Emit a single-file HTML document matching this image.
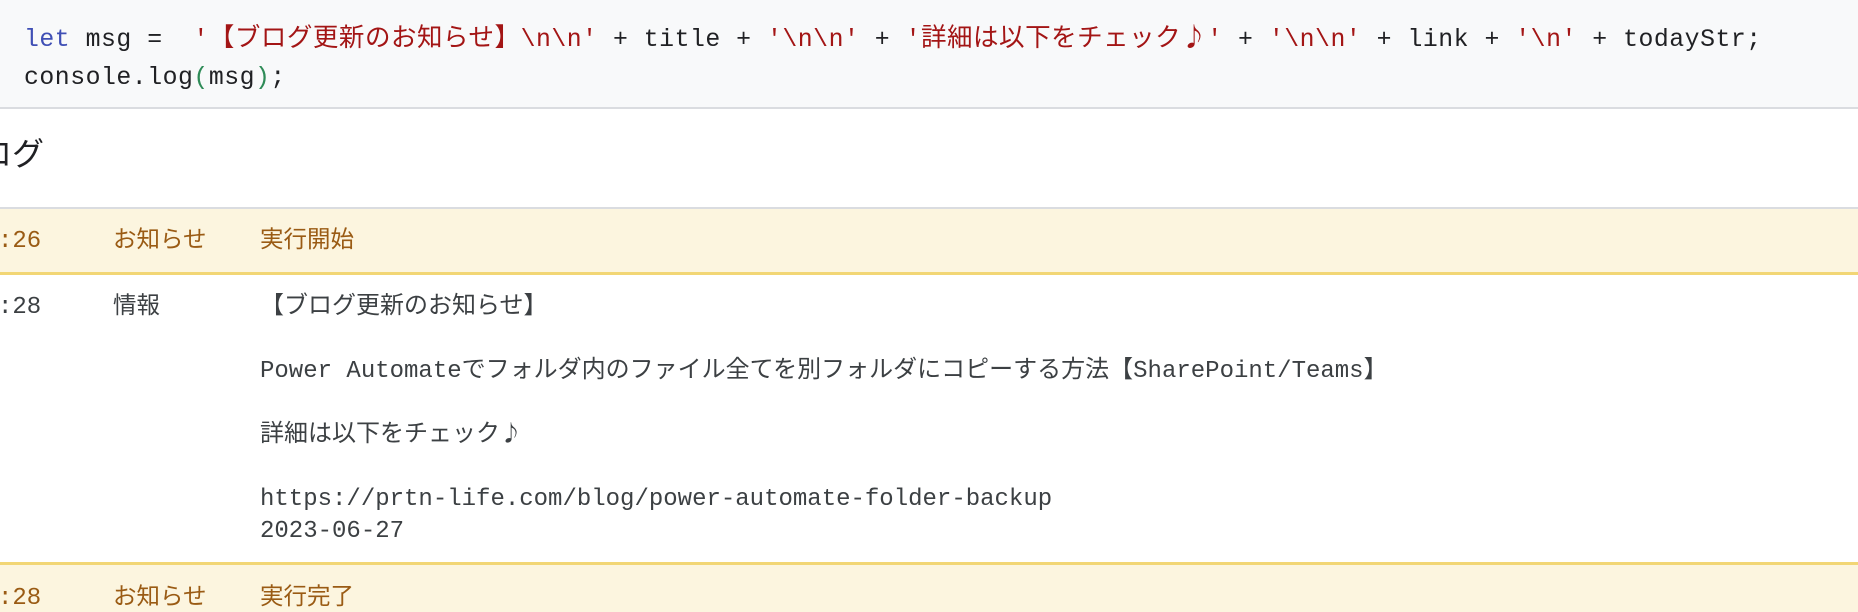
<!DOCTYPE html>
<html><head><meta charset="utf-8"><style>
html,body{margin:0;padding:0;width:1858px;height:612px;overflow:hidden;background:#fff;}
body{position:relative;font-family:"Liberation Mono","Noto Sans CJK JP",monospace;}
.code{position:absolute;left:0;top:0;width:1858px;height:107px;background:#f8f9fa;border-bottom:2px solid #dadce0;}
.cl{position:absolute;left:24px;font-size:24.8px;line-height:32px;height:32px;color:#202124;white-space:pre;letter-spacing:0.52px;}
.cj{font-family:"Noto Sans CJK JP",sans-serif;font-size:25.5px;line-height:0;}
.nt{font-family:"Noto Sans CJK JP",sans-serif;font-size:22px;line-height:0;}
.kw{color:#3f4fb5}.st{color:#a31515}.pg{color:#2e8b57}
.h{position:absolute;left:-20px;top:134px;font-family:"Liberation Sans","Noto Sans CJK JP",sans-serif;font-size:32px;line-height:40px;color:#202124;}
.sep{position:absolute;left:0;top:207px;width:1858px;height:2px;background:#dadce0;}
.y1{position:absolute;left:0;top:209px;width:1858px;height:63px;background:#fcf5df;border-bottom:3px solid #f2d675;}
.y3{position:absolute;left:0;top:562px;width:1858px;height:50px;background:#fcf5df;border-top:3px solid #f2d675;}
.t{position:absolute;font-size:24px;line-height:32px;height:32px;white-space:pre;font-family:"Liberation Mono","Noto Sans CJK JP",monospace;}
.j{font-size:23.5px}
.b{color:#9a5b14}.d{color:#3c4043}
</style></head><body>
<div class="code">
<div class="cl" style="top:24px"><span class="kw">let</span> msg =  <span class="st">'<span class="cj">【ブログ更新のお知らせ】</span>\n\n'</span> + title + <span class="st">'\n\n'</span> + <span class="st">'<span class="cj">詳細は以下をチェック♪</span>'</span> + <span class="st">'\n\n'</span> + link + <span class="st">'\n'</span> + todayStr;</div>
<div class="cl" style="top:62px">console.log<span class="pg">(</span>msg<span class="pg">)</span>;</div>
</div>
<div class="h">ログ</div>
<div class="sep"></div>
<div class="y1"></div>
<div class="t b" style="left:-2px;top:226px">:26</div>
<div class="t b j" style="left:113px;top:226px">お知らせ</div>
<div class="t b j" style="left:260px;top:226px">実行開始</div>
<div class="t d" style="left:-2px;top:292px">:28</div>
<div class="t d j" style="left:113px;top:292px">情報</div>
<div class="t d" style="left:260px;top:292px">【ブログ更新のお知らせ】</div>
<div class="t d" style="left:260px;top:356px">Power Automateでフォルダ内のファイル全てを別フォルダにコピーする方法【SharePoint/Teams】</div>
<div class="t d" style="left:260px;top:420px">詳細は以下をチェック<span class="nt">♪</span></div>
<div class="t d" style="left:260px;top:484px">https://prtn-life.com/blog/power-automate-folder-backup</div>
<div class="t d" style="left:260px;top:516px">2023-06-27</div>
<div class="y3"></div>
<div class="t b" style="left:-2px;top:583px">:28</div>
<div class="t b j" style="left:113px;top:583px">お知らせ</div>
<div class="t b j" style="left:260px;top:583px">実行完了</div>
</body></html>
